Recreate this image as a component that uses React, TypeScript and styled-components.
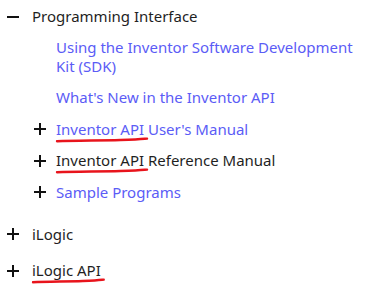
import React, { ReactNode } from "react";
import styled, { createGlobalStyle } from "styled-components";

const GlobalStyle = createGlobalStyle`
  html, body {
    margin: 0;
    padding: 0;
    background: #ffffff;
  }
  body {
    font-family: "Noto Sans", "Open Sans", sans-serif;
    font-size: 15px;
    color: #1f1f1f;
  }
`;

type Node = {
  label: ReactNode;
  link?: boolean;
  open?: boolean;
  leaf?: boolean;
  children?: Node[];
};

const Marked = ({ children }: { children: ReactNode }) => (
  <MarkWrap>
    {children}
    <Squiggle viewBox="0 0 100 6" preserveAspectRatio="none">
      <path d="M1 4.2 C 20 3.4, 45 3.6, 70 3 S 95 1.8, 99 1.6" />
    </Squiggle>
  </MarkWrap>
);

const tree: Node[] = [
  {
    label: "Programming Interface",
    open: true,
    children: [
      { label: "Using the Inventor Software Development Kit (SDK)", link: true, leaf: true },
      { label: "What's New in the Inventor API", link: true, leaf: true },
      {
        label: (
          <>
            <Marked>Inventor API</Marked> User's Manual
          </>
        ),
        link: true,
      },
      {
        label: (
          <>
            <Marked>Inventor API</Marked> Reference Manual
          </>
        ),
      },
      { label: "Sample Programs", link: true },
    ],
  },
  { label: "iLogic" },
  { label: <Marked>iLogic API</Marked> },
];

const Toggle = ({ open }: { open?: boolean }) => (
  <ToggleIcon viewBox="0 0 12 12">
    <path d="M0 6 H12" />
    {!open && <path d="M6 0 V12" />}
  </ToggleIcon>
);

const Branch = ({ nodes, nested }: { nodes: Node[]; nested?: boolean }) => (
  <List $nested={nested}>
    {nodes.map((n, i) => (
      <li key={i}>
        <Row>
          <IconCell $nested={nested}>{!n.leaf && <Toggle open={n.open} />}</IconCell>
          <Label $link={n.link}>{n.label}</Label>
        </Row>
        {n.open && n.children && <Branch nodes={n.children} nested />}
      </li>
    ))}
  </List>
);

export default function App() {
  return (
    <>
      <GlobalStyle />
      <Page>
        <Branch nodes={tree} />
      </Page>
    </>
  );
}

const Page = styled.div`
  width: 367px;
  height: 287px;
  padding: 7px 6px 0 7px;
  box-sizing: border-box;
  overflow: hidden;
`;

const List = styled.ul<{ $nested?: boolean }>`
  list-style: none;
  margin: 0;
  display: flex;
  flex-direction: column;
  gap: ${({ $nested }) => ($nested ? "12.4px" : "17.4px")};
  padding: ${({ $nested }) => ($nested ? "12px 0 5.8px 27px" : "0")};
`;

const Row = styled.div`
  display: flex;
  align-items: flex-start;
`;

const IconCell = styled.span<{ $nested?: boolean }>`
  flex: 0 0 ${({ $nested }) => ($nested ? "22px" : "25px")};
  height: 19px;
  display: flex;
  align-items: center;
`;

const ToggleIcon = styled.svg`
  width: 12px;
  height: 12px;
  stroke: #111111;
  stroke-width: 2;
  fill: none;
`;

const Label = styled.span<{ $link?: boolean }>`
  line-height: 19px;
  color: ${({ $link }) => ($link ? "#5b5cf6" : "#1f1f1f")};
`;

const MarkWrap = styled.span`
  position: relative;
  display: inline-block;
`;

const Squiggle = styled.svg`
  position: absolute;
  left: 0;
  bottom: -4px;
  width: calc(100% + 4px);
  height: 6px;
  fill: none;
  stroke: #e8141c;
  stroke-width: 2.4;
  stroke-linecap: round;
  overflow: visible;
`;
